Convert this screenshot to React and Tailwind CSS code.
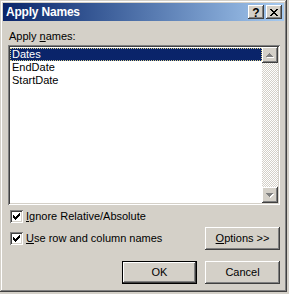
import React from 'react';

const raised = 'shadow-[inset_-1px_-1px_#404040,inset_1px_1px_#ffffff,inset_-2px_-2px_#808080,inset_2px_2px_#d4d0c8]';
const sunken = 'shadow-[inset_1px_1px_#808080,inset_-1px_-1px_#ffffff,inset_2px_2px_#404040,inset_-2px_-2px_#d4d0c8]';

function Arrow({ down }) {
  const rows = [1, 3, 5, 7];
  return (
    <svg width="8" height="5" shapeRendering="crispEdges">
      {rows.map((w, i) => {
        const y = down ? 3 - i : i;
        const x = (7 - w) / 2;
        return <rect key={'w' + i} x={x + 1} y={y + 1} width={w} height="1" fill="#ffffff" />;
      })}
      {rows.map((w, i) => {
        const y = down ? 3 - i : i;
        const x = (7 - w) / 2;
        return <rect key={'g' + i} x={x} y={y} width={w} height="1" fill="#808080" />;
      })}
    </svg>
  );
}

function Check() {
  const tops = [2, 3, 4, 3, 2, 1, 0];
  return (
    <svg width="7" height="7" shapeRendering="crispEdges">
      {tops.map((t, i) => (
        <rect key={i} x={i} y={t} width="1" height="3" fill="#000" />
      ))}
    </svg>
  );
}

function Checkbox({ children }) {
  return (
    <div className="flex items-center gap-[3px] pl-[2px]">
      <div className={`w-[13px] h-[13px] bg-white flex items-center justify-center ${sunken}`}>
        <Check />
      </div>
      <span className="leading-[13px]">{children}</span>
    </div>
  );
}

function Button({ children, isDefault }) {
  if (isDefault) {
    return (
      <div className="w-[75px] h-[23px] border border-black bg-[#d4d0c8]">
        <div className={`w-full h-full flex items-center justify-center ${raised}`}>{children}</div>
      </div>
    );
  }
  return (
    <div className={`w-[75px] h-[23px] bg-[#d4d0c8] flex items-center justify-center ${raised}`}>{children}</div>
  );
}

function TitleButton({ children }) {
  return (
    <div className={`w-[16px] h-[14px] bg-[#d4d0c8] flex items-center justify-center ${raised}`}>{children}</div>
  );
}

export default function App() {
  const items = ['Dates', 'EndDate', 'StartDate'];
  return (
    <div className="w-[289px] h-[294px] bg-[#d4d0c8] text-[11px] text-black" style={{ fontFamily: '"Liberation Sans", Arial, sans-serif' }}>
      <div className="w-[287px] h-[292px] p-[3px] flex flex-col shadow-[inset_-1px_-1px_#404040,inset_1px_1px_#d4d0c8,inset_-2px_-2px_#808080,inset_2px_2px_#ffffff]">
        {/* title bar */}
        <div className="h-[18px] flex items-center justify-between pl-[3px] pr-[2px] bg-gradient-to-r from-[#0a246a] to-[#a6caf0]">
          <span className="text-white font-bold text-[12px] tracking-[-0.2px]">Apply Names</span>
          <div className="flex gap-[2px]">
            <TitleButton>
              <span className="font-bold text-[12px] leading-[12px] mt-[1px]">?</span>
            </TitleButton>
            <TitleButton>
              <svg width="8" height="7" shapeRendering="crispEdges">
                {[0, 1, 2, 3, 4, 5, 6].map((r) => (
                  <g key={r}>
                    <rect x={r} y={r} width="2" height="1" fill="#000" />
                    <rect x={6 - r} y={r} width="2" height="1" fill="#000" />
                  </g>
                ))}
              </svg>
            </TitleButton>
          </div>
        </div>

        <div className="flex flex-col pl-[5px] pr-[4px] pt-[9px]">
          <div className="pl-[1px] leading-[13px] h-[13px]">
            Apply <span className="underline">n</span>ames:
          </div>

          {/* list box */}
          <div className={`mt-[2px] h-[160px] bg-white p-[2px] flex ${sunken}`}>
            <div className="flex-1 flex flex-col pt-[1px]">
              {items.map((it, i) => (
                <div
                  key={it}
                  className={`h-[13px] leading-[11px] pl-[1px] ${i === 0 ? 'bg-[#0a246a] text-white border border-dotted border-[#d8cf8a]' : 'border border-transparent'}`}
                >
                  {it}
                </div>
              ))}
            </div>
            <div className="w-[16px] flex flex-col">
              <div className={`h-[16px] bg-[#d4d0c8] flex items-center justify-center ${raised}`}>
                <Arrow />
              </div>
              <div className="flex-1 bg-[conic-gradient(#ffffff_25%,#d4d0c8_0_50%,#ffffff_0_75%,#d4d0c8_0)] bg-[length:2px_2px]" />
              <div className={`h-[16px] bg-[#d4d0c8] flex items-center justify-center ${raised}`}>
                <Arrow down />
              </div>
            </div>
          </div>

          <div className="mt-[5px]">
            <Checkbox>
              <span className="underline">I</span>gnore Relative/Absolute
            </Checkbox>
          </div>

          <div className="mt-[4px] flex items-center justify-between">
            <Checkbox>
              <span className="underline">U</span>se row and column names
            </Checkbox>
            <Button>
              <span><span className="underline">O</span>ptions &gt;&gt;</span>
            </Button>
          </div>

          <div className="mt-[11px] flex justify-end gap-[8px]">
            <Button isDefault>OK</Button>
            <Button>Cancel</Button>
          </div>
        </div>
      </div>
    </div>
  );
}
